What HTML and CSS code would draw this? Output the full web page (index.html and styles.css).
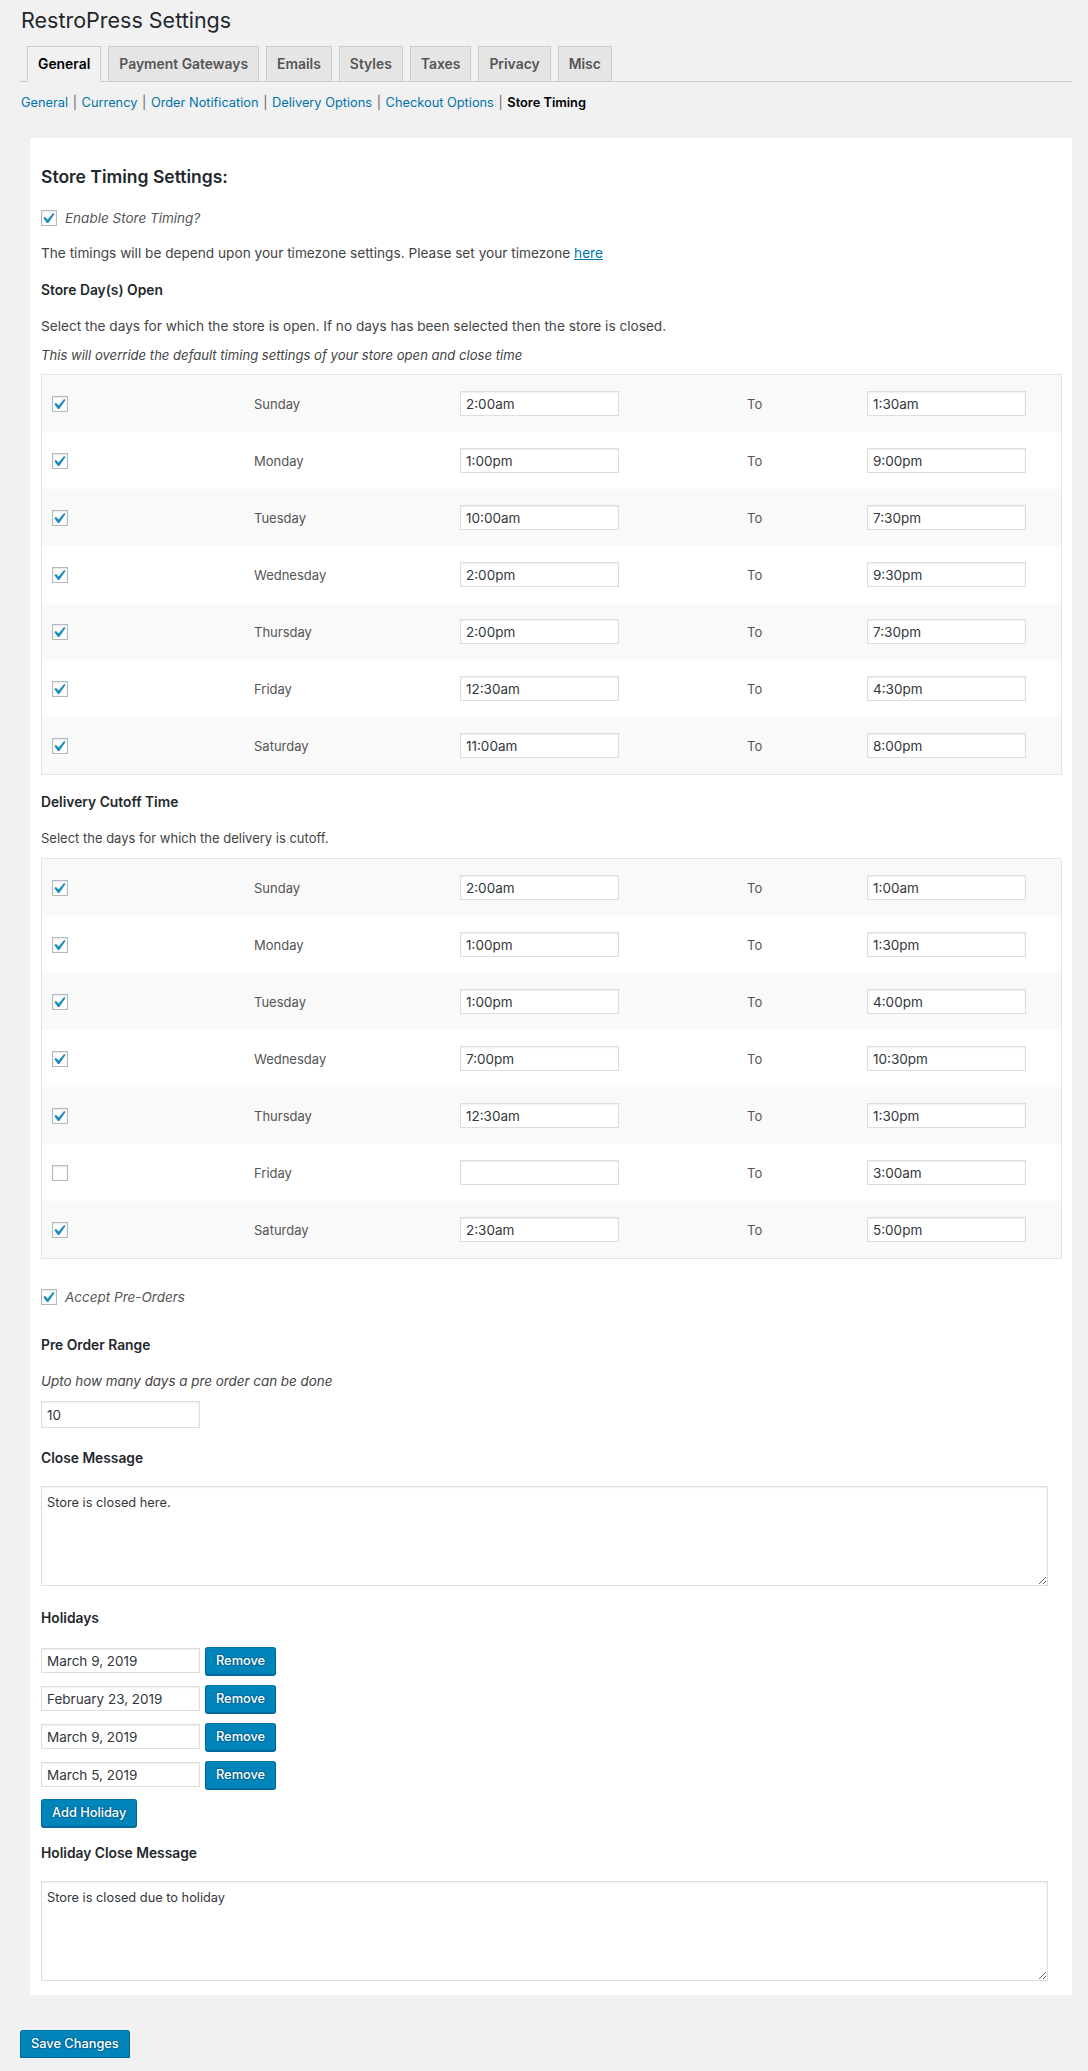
FILE: index.html
```html
<!DOCTYPE html>
<html lang="en">
<head>
    <meta charset="UTF-8">
    <meta name="viewport" content="width=device-width, initial-scale=1.0">
    <title>RestroPress Settings</title>
    <link rel="stylesheet" href="styles.css">
</head>
<body>
    <div class="wrap">
        <h1>RestroPress Settings</h1>

        <nav class="nav-tab-wrapper">
            <a href="#" class="nav-tab nav-tab-active">General</a>
            <a href="#" class="nav-tab">Payment Gateways</a>
            <a href="#" class="nav-tab">Emails</a>
            <a href="#" class="nav-tab">Styles</a>
            <a href="#" class="nav-tab">Taxes</a>
            <a href="#" class="nav-tab">Privacy</a>
            <a href="#" class="nav-tab">Misc</a>
        </nav>

        <ul class="subsubsub">
            <li><a href="#">General</a> | </li>
            <li><a href="#">Currency</a> | </li>
            <li><a href="#">Order Notification</a> | </li>
            <li><a href="#">Delivery Options</a> | </li>
            <li><a href="#">Checkout Options</a> | </li>
            <li><a href="#" class="current">Store Timing</a></li>
        </ul>

        <form>
            <div class="panel">
                <h2>Store Timing Settings:</h2>

                <label class="check-row">
                    <span class="checkbox checked"></span>
                    <em>Enable Store Timing?</em>
                </label>

                <p class="text big gap-15">The timings will be depend upon your timezone settings. Please set your timezone <a href="#">here</a></p>

                <h4 class="field-title gap-17">Store Day(s) Open</h4>
                <p class="text big gap-16">Select the days for which the store is open. If no days has been selected then the store is closed.</p>
                <p class="text desc">This will override the default timing settings of your store open and close time</p>
                <div class="timing-table" id="openTable"></div>

                <h4 class="field-title gap-17">Delivery Cutoff Time</h4>
                <p class="text gap-16">Select the days for which the delivery is cutoff.</p>
                <div class="timing-table" id="cutoffTable"></div>

                <label class="check-row gap-28">
                    <span class="checkbox checked"></span>
                    <em>Accept Pre-Orders</em>
                </label>

                <h4 class="field-title gap-28">Pre Order Range</h4>
                <p class="text desc range-note">Upto how many days a pre order can be done</p>
                <input type="text" class="field small-field" value="10">

                <h4 class="field-title gap-20">Close Message</h4>
                <textarea class="field message">Store is closed here.</textarea>

                <h4 class="field-title gap-22">Holidays</h4>
                <div class="holidays" id="holidayList">
                    <button type="button" class="button-primary">Add Holiday</button>
                </div>

                <h4 class="field-title gap-16">Holiday Close Message</h4>
                <textarea class="field message">Store is closed due to holiday</textarea>
            </div>

            <button type="button" class="button-primary save">Save Changes</button>
        </form>
    </div>

    <script>
        // Store open hours and delivery cutoff hours
        const openDays = [
            { day: "Sunday", on: true, from: "2:00am", to: "1:30am" },
            { day: "Monday", on: true, from: "1:00pm", to: "9:00pm" },
            { day: "Tuesday", on: true, from: "10:00am", to: "7:30pm" },
            { day: "Wednesday", on: true, from: "2:00pm", to: "9:30pm" },
            { day: "Thursday", on: true, from: "2:00pm", to: "7:30pm" },
            { day: "Friday", on: true, from: "12:30am", to: "4:30pm" },
            { day: "Saturday", on: true, from: "11:00am", to: "8:00pm" }
        ];

        const cutoffDays = [
            { day: "Sunday", on: true, from: "2:00am", to: "1:00am" },
            { day: "Monday", on: true, from: "1:00pm", to: "1:30pm" },
            { day: "Tuesday", on: true, from: "1:00pm", to: "4:00pm" },
            { day: "Wednesday", on: true, from: "7:00pm", to: "10:30pm" },
            { day: "Thursday", on: true, from: "12:30am", to: "1:30pm" },
            { day: "Friday", on: false, from: "", to: "3:00am" },
            { day: "Saturday", on: true, from: "2:30am", to: "5:00pm" }
        ];

        const holidays = ["March 9, 2019", "February 23, 2019", "March 9, 2019", "March 5, 2019"];

        // Build one table of day rows
        function displayTimings(id, days) {
            const table = document.getElementById(id);
            days.forEach(item => {
                const row = document.createElement("div");
                row.classList.add("timing-row");
                row.innerHTML = `
                    <span class="checkbox ${item.on ? "checked" : ""}"></span>
                    <span class="day">${item.day}</span>
                    <input type="text" class="field time-field" value="${item.from}">
                    <span class="to">To</span>
                    <input type="text" class="field time-field" value="${item.to}">
                `;
                table.appendChild(row);
            });
        }

        // Holiday date inputs go above the Add Holiday button
        function displayHolidays() {
            const list = document.getElementById("holidayList");
            const addButton = list.querySelector(".button-primary");
            holidays.forEach(date => {
                const row = document.createElement("div");
                row.classList.add("holiday-row");
                row.innerHTML = `
                    <input type="text" class="field small-field" value="${date}">
                    <button type="button" class="button-primary">Remove</button>
                `;
                list.insertBefore(row, addButton);
            });
        }

        // Tick mark for every checked box
        function drawChecks() {
            document.querySelectorAll(".checkbox.checked").forEach(box => {
                box.innerHTML = `<svg viewBox="3.5 2 15 15" width="16" height="16"><path d="M14.83 4.89l1.34.94-5.81 8.38H9.02L5.78 9.67l1.34-1.25 2.57 2.4z"/></svg>`;
            });
        }

        displayTimings("openTable", openDays);
        displayTimings("cutoffTable", cutoffDays);
        displayHolidays();
        drawChecks();
    </script>
</body>
</html>
```

FILE: styles.css
```css
/* General */
* {
    margin: 0;
    padding: 0;
    box-sizing: border-box;
}

body {
    background: #f1f1f1;
    color: #444;
    font-family: Inter, Roboto, "Liberation Sans", sans-serif;
    font-size: 13px;
    line-height: 20px;
}

a {
    color: #0073aa;
}

.wrap {
    padding: 6px 16px 0 20px;
}

h1 {
    font-size: 21.5px;
    font-weight: 400;
    line-height: 28px;
    color: #23282d;
    padding-left: 1px;
}

/* Tabs */
.nav-tab-wrapper {
    display: flex;
    margin-top: 12px;
    border-bottom: 1px solid #ccc;
}

.nav-tab {
    margin-left: 7px;
    margin-bottom: -1px;
    padding: 5px 10px;
    font-size: 13.9px;
    font-weight: 600;
    line-height: 24px;
    color: #555;
    text-decoration: none;
    background: #e5e5e5;
    border: 1px solid #ccc;
    border-bottom: 1px solid #ccc;
}

.nav-tab-active {
    color: #000;
    background: #f1f1f1;
    border-bottom-color: #f1f1f1;
}

/* Sub navigation */
.subsubsub {
    display: flex;
    list-style: none;
    margin-top: 8px;
    font-size: 12.8px;
    line-height: 26px;
    color: #666;
}

.subsubsub li {
    white-space: pre;
}

.subsubsub a {
    padding: 0 1px;
    text-decoration: none;
}

.subsubsub a.current {
    color: #000;
    font-weight: 600;
}

/* Settings panel */
.panel {
    margin: 22px 0 0 10px;
    padding: 28px 10px 14px 11px;
    background: #fff;
}

.panel h2 {
    font-size: 17.5px;
    font-weight: 600;
    line-height: 22px;
    color: #23282d;
}

.check-row {
    display: flex;
    align-items: center;
    gap: 8px;
    margin-top: 20px;
    height: 20px;
    font-size: 13.5px;
    color: #555;
}

.checkbox {
    display: inline-block;
    width: 16px;
    height: 16px;
    flex-shrink: 0;
    background: #fff;
    border: 1px solid #b4b9be;
    box-shadow: inset 0 1px 2px rgba(0, 0, 0, 0.1);
}

.checkbox svg {
    display: block;
    margin: -1px 0 0 -1px;
    fill: #1e8cbe;
}

.text {
    color: #444;
}

.text.big {
    font-size: 13.65px;
}

.desc {
    font-style: italic;
    font-size: 13.1px;
    margin-top: 9px;
}

.range-note {
    font-size: 13.4px;
    margin-top: 16px;
}

.field-title {
    font-size: 13.8px;
    font-weight: 600;
    color: #23282d;
}

.gap-15 { margin-top: 15px; }
.gap-16 { margin-top: 16px; }
.gap-17 { margin-top: 17px; }
.gap-20 { margin-top: 20px; }
.gap-22 { margin-top: 22px; }
.gap-28 { margin-top: 28px; }

/* Day tables */
.timing-table {
    margin-top: 9px;
    border: 1px solid #e5e5e5;
}

#cutoffTable {
    margin-top: 10px;
}

.timing-row {
    display: grid;
    grid-template-columns: 202px 206px 287px 120px 1fr;
    align-items: center;
    height: 57px;
    padding-left: 10px;
    background: #fff;
}

.timing-row:nth-child(odd) {
    background: #f9f9f9;
}

.day,
.to {
    color: #555;
}

.field {
    font-family: inherit;
    font-size: 13.5px;
    color: #32373c;
    background: #fff;
    border: 1px solid #ddd;
    box-shadow: inset 0 1px 2px rgba(0, 0, 0, 0.07);
    padding: 0 5px;
    outline: none;
}

.time-field {
    width: 159px;
    height: 25px;
}

.small-field {
    width: 159px;
    height: 25px;
}

.panel > .small-field {
    display: block;
    height: 27px;
    margin-top: 10px;
}

.message {
    display: block;
    width: 1007px;
    height: 100px;
    margin-top: 18px;
    padding: 6px 5px;
    font-size: 12.8px;
    line-height: 20px;
    resize: vertical;
}

/* Holidays */
.holidays {
    display: flex;
    flex-direction: column;
    align-items: flex-start;
    gap: 10px;
    margin-top: 19px;
}

.holiday-row {
    display: flex;
    align-items: flex-start;
    gap: 5px;
}

.holiday-row .small-field {
    margin-top: 1px;
}

/* Buttons */
.button-primary {
    height: 28px;
    padding: 0 10px 1px;
    font-family: inherit;
    font-size: 12.8px;
    font-weight: 500;
    line-height: 26px;
    color: #fff;
    background: #0085ba;
    border: 1px solid;
    border-color: #0073aa #006799 #006799;
    border-radius: 3px;
    box-shadow: 0 1px 0 #006799;
    text-shadow: 0 -1px 1px #006799, 1px 0 1px #006799, 0 1px 1px #006799, -1px 0 1px #006799;
    cursor: pointer;
}

.save {
    margin-top: 35px;
}
```
